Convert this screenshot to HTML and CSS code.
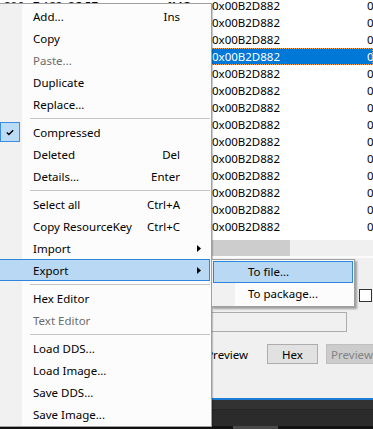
FILE: index.html
```html
<!DOCTYPE html>
<html>
<head>
<meta charset="utf-8">
<link rel="stylesheet" href="styles.css">
</head>
<body>
<div class="app">
  <div class="list">
    <div class="rows">
      <div class="row"><span class="c1">806</span><span>7,182</span><span>8C 57</span><span>IMG</span><span>0x00B2D882</span><span>0x00000000</span></div>
      <div class="row"><span class="c1">806</span><span>7,182</span><span>8C 57</span><span>IMG</span><span>0x00B2D882</span><span>0x00000000</span></div>
      <div class="row"><span class="c1">806</span><span>7,182</span><span>8C 57</span><span>IMG</span><span>0x00B2D882</span><span>0x00000000</span></div>
      <div class="row sel"><span class="c1">806</span><span>7,182</span><span>8C 57</span><span>IMG</span><span>0x00B2D882</span><span>0x00000000</span></div>
      <div class="row"><span class="c1">806</span><span>7,182</span><span>8C 57</span><span>IMG</span><span>0x00B2D882</span><span>0x00000000</span></div>
      <div class="row"><span class="c1">806</span><span>7,182</span><span>8C 57</span><span>IMG</span><span>0x00B2D882</span><span>0x00000000</span></div>
      <div class="row"><span class="c1">806</span><span>7,182</span><span>8C 57</span><span>IMG</span><span>0x00B2D882</span><span>0x00000000</span></div>
      <div class="row"><span class="c1">806</span><span>7,182</span><span>8C 57</span><span>IMG</span><span>0x00B2D882</span><span>0x00000000</span></div>
      <div class="row"><span class="c1">806</span><span>7,182</span><span>8C 57</span><span>IMG</span><span>0x00B2D882</span><span>0x00000000</span></div>
      <div class="row"><span class="c1">806</span><span>7,182</span><span>8C 57</span><span>IMG</span><span>0x00B2D882</span><span>0x00000000</span></div>
      <div class="row"><span class="c1">806</span><span>7,182</span><span>8C 57</span><span>IMG</span><span>0x00B2D882</span><span>0x00000000</span></div>
      <div class="row"><span class="c1">806</span><span>7,182</span><span>8C 57</span><span>IMG</span><span>0x00B2D882</span><span>0x00000000</span></div>
      <div class="row"><span class="c1">806</span><span>7,182</span><span>8C 57</span><span>IMG</span><span>0x00B2D882</span><span>0x00000000</span></div>
      <div class="row"><span class="c1">806</span><span>7,182</span><span>8C 57</span><span>IMG</span><span>0x00B2D882</span><span>0x00000000</span></div>
      <div class="row"><span class="c1">806</span><span>7,182</span><span>8C 57</span><span>IMG</span><span>0x00B2D882</span><span>0x00000000</span></div>
    </div>
  </div>
  <div class="hscroll"><div class="thumb"></div></div>
  <div class="list-edge"></div>
  <div class="panel">
    <div class="prow prow-check"><span class="checkbox"></span></div>
    <div class="prow prow-text"><span class="textbox"></span></div>
    <div class="prow prow-btns">
      <span class="plabel">Preview</span>
      <span class="btn btn-hex">Hex</span>
      <span class="btn btn-dis">Preview</span>
    </div>
  </div>
  <div class="accent"></div>
  <div class="footer">
    <div class="f1"></div>
    <div class="f2"></div>
  </div>
  <div class="bottom"><span class="seg"></span></div>
</div>

<div class="menu">
  <div class="item"><span class="icon"></span><span class="label">Add...</span><span class="key">Ins</span><span class="sub"></span></div>
  <div class="item"><span class="icon"></span><span class="label">Copy</span><span class="sub"></span></div>
  <div class="item dis"><span class="icon"></span><span class="label">Paste...</span><span class="sub"></span></div>
  <div class="item"><span class="icon"></span><span class="label">Duplicate</span><span class="sub"></span></div>
  <div class="item"><span class="icon"></span><span class="label">Replace...</span><span class="sub"></span></div>
  <div class="sep"></div>
  <div class="item"><span class="icon"><span class="check"><svg width="8" height="7" viewBox="0 0 8 7"><polyline points="0.8,3.4 2.9,5.5 7.2,1.2" fill="none" stroke="#000" stroke-width="1.4"/></svg></span></span><span class="label">Compressed</span><span class="sub"></span></div>
  <div class="item"><span class="icon"></span><span class="label">Deleted</span><span class="key">Del</span><span class="sub"></span></div>
  <div class="item"><span class="icon"></span><span class="label">Details...</span><span class="key">Enter</span><span class="sub"></span></div>
  <div class="sep"></div>
  <div class="item"><span class="icon"></span><span class="label">Select all</span><span class="key">Ctrl+A</span><span class="sub"></span></div>
  <div class="item"><span class="icon"></span><span class="label">Copy ResourceKey</span><span class="key">Ctrl+C</span><span class="sub"></span></div>
  <div class="item"><span class="icon"></span><span class="label">Import</span><span class="sub"><svg class="arrow" width="4" height="7" viewBox="0 0 4 7"><polygon points="0,0 4,3.5 0,7" fill="#000"/></svg></span></div>
  <div class="item hot"><span class="icon"></span><span class="label">Export</span><span class="sub"><svg class="arrow" width="4" height="7" viewBox="0 0 4 7"><polygon points="0,0 4,3.5 0,7" fill="#000"/></svg></span></div>
  <div class="sep"></div>
  <div class="item"><span class="icon"></span><span class="label">Hex Editor</span><span class="sub"></span></div>
  <div class="item dis"><span class="icon"></span><span class="label">Text Editor</span><span class="sub"></span></div>
  <div class="sep"></div>
  <div class="item"><span class="icon"></span><span class="label">Load DDS...</span><span class="sub"></span></div>
  <div class="item"><span class="icon"></span><span class="label">Load Image...</span><span class="sub"></span></div>
  <div class="item"><span class="icon"></span><span class="label">Save DDS...</span><span class="sub"></span></div>
  <div class="item"><span class="icon"></span><span class="label">Save Image...</span><span class="sub"></span></div>
</div>

<div class="submenu">
  <div class="sitem hot">To file...</div>
  <div class="sitem">To package...</div>
</div>
</body>
</html>
```

FILE: styles.css
```css
html, body {
  margin: 0;
  padding: 0;
}
body {
  width: 373px;
  height: 429px;
  overflow: hidden;
  position: relative;
  background: #f0f0f0;
  font-family: "Noto Sans", "Open Sans", sans-serif;
  font-size: 11.5px;
  color: #000;
}

.app {
  display: flex;
  flex-direction: column;
  height: 429px;
}

/* list view */
.list {
  height: 240px;
  flex: none;
  overflow: hidden;
  background: #fff;
}
.rows {
  margin-top: -3px;
}
.row {
  display: grid;
  grid-template-columns: 33px 35px 100px 44px 155px 1fr;
  height: 17px;
  line-height: 17px;
  white-space: nowrap;
  overflow: hidden;
  color: #000;
}
.row .c1 {
  padding-left: 4px;
}
.row.sel {
  background: #0078d7;
  color: #fff;
  outline: 1px dotted #f0a860;
  outline-offset: -1px;
}

.hscroll {
  height: 16px;
  flex: none;
  background: #f0f0f0;
  display: flex;
}
.thumb {
  margin-left: 40px;
  width: 250px;
  background: #cdcdcd;
}
.list-edge {
  height: 2px;
  flex: none;
  background: #fbfbfb;
}

/* lower panel */
.panel {
  height: 140px;
  flex: none;
  background: #f0f0f0;
  display: flex;
  flex-direction: column;
}
.prow {
  display: flex;
}
.prow-check {
  margin-top: 31px;
  justify-content: flex-end;
  padding-right: 1px;
}
.checkbox {
  width: 13px;
  height: 13px;
  box-sizing: border-box;
  border: 1px solid #333;
  background: #fff;
}
.prow-text {
  margin-top: 10px;
  justify-content: flex-end;
  padding-right: 26px;
}
.textbox {
  width: 250px;
  height: 20px;
  box-sizing: border-box;
  border: 1px solid #adadad;
  background: #f0f0f0;
}
.prow-btns {
  margin-top: 12px;
  align-items: center;
  white-space: nowrap;
}
.plabel {
  width: 248px;
  flex: none;
  text-align: right;
}
.btn {
  height: 20px;
  box-sizing: border-box;
  display: flex;
  align-items: center;
  justify-content: center;
  flex: none;
}
.btn-hex {
  margin-left: 19px;
  width: 51px;
  border: 1px solid #adadad;
  background: #e1e1e1;
}
.btn-dis {
  margin-left: 8px;
  width: 52px;
  border: 1px solid #bfbfbf;
  background: #cccccc;
  color: #838383;
}

.accent {
  height: 2px;
  flex: none;
  background: #1b7bd5;
}
.footer {
  height: 26px;
  flex: none;
  display: flex;
  flex-direction: column;
}
.f1 {
  height: 9px;
  background: #323232;
}
.f2 {
  flex: 1;
  background: #2b2b2b;
  border-top: 1px solid #262626;
}
.bottom {
  height: 3px;
  flex: none;
  background: #141414;
  display: flex;
}
.seg {
  margin-left: 233px;
  width: 45px;
  background: #4a4a4a;
}

/* context menu */
.menu {
  position: absolute;
  left: -2px;
  top: 3px;
  width: 214px;
  box-sizing: border-box;
  border: 1px solid #a0a0a0;
  padding: 1px 1px 1px 0;
  background: linear-gradient(to right, #f1f1f1 23px, #fcfcfc 23px);
  box-shadow: 1px 1px 1px rgba(0, 0, 0, 0.2);
}
.item {
  display: flex;
  align-items: center;
  height: 22px;
  white-space: nowrap;
}
.item.dis {
  color: #6d6d6d;
}
.item.hot {
  background: #b8d8f4;
  box-shadow: inset 0 0 0 1px #2d86dc;
}
.icon {
  width: 34px;
  flex: none;
  display: flex;
  align-items: center;
}
.check {
  margin-left: 1px;
  width: 20px;
  height: 20px;
  box-sizing: border-box;
  border: 1px solid #3d8ee0;
  background: #bcdcf6;
  display: flex;
  align-items: center;
  justify-content: center;
}
.label {
  flex: 1;
}
.key {
  flex: none;
}
.sub {
  width: 30px;
  flex: none;
  display: flex;
  align-items: center;
}
.arrow {
  margin-left: 17px;
  display: block;
}
.sep {
  height: 6px;
  display: flex;
  align-items: center;
  padding-left: 31px;
}
.sep::before {
  content: "";
  flex: 1;
  height: 1px;
  background: #c4c4c4;
}

/* submenu */
.submenu {
  position: absolute;
  left: 211px;
  top: 259px;
  width: 144px;
  box-sizing: border-box;
  border: 1px solid #a0a0a0;
  padding: 1px;
  background: linear-gradient(to right, #f1f1f1 23px, #fcfcfc 23px);
  box-shadow: 2px 2px 2px rgba(0, 0, 0, 0.35);
}
.sitem {
  height: 22px;
  line-height: 22px;
  padding-left: 35px;
  white-space: nowrap;
}
.sitem.hot {
  background: #b8d8f4;
  box-shadow: inset 0 0 0 1px #2d86dc;
}
```
